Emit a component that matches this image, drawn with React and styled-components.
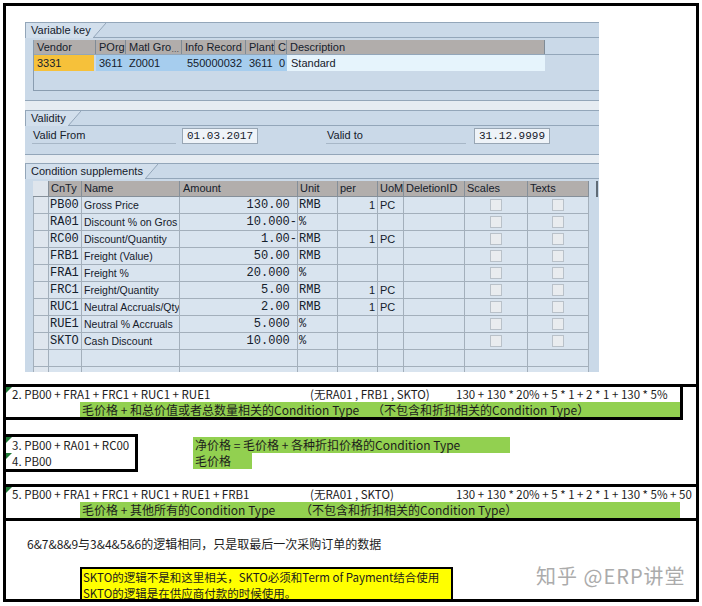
import styled, { createGlobalStyle } from "styled-components";

const GlobalStyle = createGlobalStyle`
  html, body {
    margin: 0;
    padding: 0;
    background: #fff;
  }
  body {
    font-family: "Liberation Sans", Arial, sans-serif;
  }
`;

const sapLine = "#93a6b9";
const gridLine = "#a3afbb";

const Page = styled.div`
  padding: 3px 0 0 3px;
`;

const Frame = styled.div`
  position: relative;
  width: 690px;
  border: 3px solid #000;
`;

/* ---------- SAP screen ---------- */

const SapArea = styled.div`
  height: 381px;
  box-sizing: border-box;
  padding: 16px 0 0 19px;
  border-bottom: 3px solid #000;
`;

const SapScreen = styled.div`
  width: 574px;
  height: 350px;
  background: #e6ecf2;
  display: flex;
  flex-direction: column;
  overflow: hidden;
  color: #15202b;
  font-size: 11px;
`;

const Panel = styled.section`
  flex: none;
  box-sizing: border-box;
  height: ${(p) => p.$h}px;
  margin-top: ${(p) => p.$gap || 0}px;
  background: #cad9e8;
  border-top: 1px solid ${sapLine};
  border-bottom: ${(p) => (p.$open ? "none" : `1px solid ${sapLine}`)};
`;

const PanelHead = styled.div`
  display: flex;
  height: 15px;
`;

const Tab = styled.div`
  padding: 0 2px 0 5px;
  border-left: 1px solid ${sapLine};
  background: #d2dfec;
  line-height: 14px;
  white-space: nowrap;
`;

const TabEdge = styled.svg`
  display: block;
  flex: none;
  width: 13px;
  height: 15px;
`;

const HeadRule = styled.div`
  flex: 1;
  border-bottom: 1px solid ${sapLine};
`;

const PanelTitle = ({ children }) => (
  <PanelHead>
    <Tab>{children}</Tab>
    <TabEdge viewBox="0 0 13 15">
      <polygon points="0,0 13,0 0,15" fill="#d2dfec" />
      <line x1="0" y1="15" x2="13" y2="0" stroke={sapLine} strokeWidth="1" />
      <line x1="0" y1="14.5" x2="13" y2="14.5" stroke={sapLine} strokeWidth="1" />
    </TabEdge>
    <HeadRule />
  </PanelHead>
);

/* variable key table */

const KeyFrame = styled.div`
  margin: 2px 0 0 8px;
  height: 50px;
  border-left: 1px solid #8a9db0;
  border-bottom: 1px solid #8a9db0;
`;

const KeyRow = styled.div`
  display: grid;
  grid-template-columns: 62px 30px 56px 64px 29px 12px 258px 1fr;
  height: ${(p) => p.$h}px;
  border-bottom: ${(p) => (p.$head ? `1px solid ${sapLine}` : "none")};
  box-sizing: border-box;
`;

const KeyHead = styled.div`
  background: #b1adab;
  border-right: 1px solid #7f8b96;
  padding-left: 3px;
  line-height: 14px;
  white-space: nowrap;
  overflow: hidden;
`;

const Ellipsis = styled.span`
  font-size: 8px;
  vertical-align: -1px;
`;

const KeyCell = styled.div`
  background: ${(p) => p.$bg};
  margin-right: ${(p) => p.$gap || 0}px;
  padding-left: ${(p) => (p.$pad ?? 3)}px;
  line-height: 16px;
  white-space: nowrap;
`;

/* validity */

const ValidRow = styled.div`
  display: flex;
  align-items: center;
  height: 17px;
  margin: 1px 0 0 7px;
`;

const FieldLabel = styled.div`
  width: ${(p) => p.$w}px;
  height: 16px;
  box-sizing: border-box;
  padding-left: 1px;
  line-height: 15px;
  border-bottom: 1px solid #a7b7c7;
  margin-right: ${(p) => p.$after}px;
`;

const DateInput = styled.div`
  width: 76px;
  height: 16px;
  box-sizing: border-box;
  border: 1px solid #98a6b4;
  background: #eef3f8;
  font-family: "Liberation Mono", monospace;
  font-size: 11px;
  line-height: 14px;
  padding-left: 4px;
  margin-right: ${(p) => p.$after || 0}px;
`;

/* condition table */

const COLS = "16px 33px 98px 118px 40px 40px 26px 61px 63px 61px 1fr";

const CondTable = styled.div`
  margin: 2px 0 0 8px;
`;

const CondRow = styled.div`
  display: grid;
  grid-template-columns: ${COLS};
  height: ${(p) => p.$h}px;
`;

const HeadCell = styled.div`
  background: ${(p) => (p.$light ? "#dfe5ec" : "#b2aeac")};
  border-right: 1px solid #858f99;
  border-bottom: 1px solid #858f99;
  padding-left: ${(p) => p.$pad ?? 2}px;
  line-height: 15px;
  white-space: nowrap;
  overflow: hidden;
`;

const ScrollEdge = styled.div`
  border-right: 2px solid #5f6b76;
  margin-right: 1px;
`;

const Cell = styled.div`
  background: ${(p) => (p.$light ? "#dfe6ee" : "#d9e4ef")};
  border-right: 1px solid ${gridLine};
  border-bottom: 1px solid ${gridLine};
  border-left: ${(p) => (p.$first ? `1px solid ${gridLine}` : "none")};
  display: flex;
  align-items: center;
  justify-content: ${(p) => (p.$align === "right" ? "flex-end" : p.$align === "center" ? "center" : "flex-start")};
  padding: 0 ${(p) => p.$pr || 0}px 0 ${(p) => p.$pl || 0}px;
  font-family: ${(p) => (p.$mono ? '"Liberation Mono", monospace' : "inherit")};
  font-size: ${(p) => (p.$mono ? "12px" : p.$small ? "10.5px" : "11px")};
  white-space: pre;
  overflow: hidden;
`;

const Check = styled.span`
  width: 10px;
  height: 10px;
  border: 1px solid #b9c1c9;
  background: #e9ecef;
`;

const keyHeads = ["Vendor", "POrg", "Matl Gro", "Info Record", "Plant", "C", "Description"];

const conditions = [
  { type: "PB00", name: "Gross Price", amount: "130.00", unit: "RMB", per: "1", uom: "PC" },
  { type: "RA01", name: "Discount % on Gros", amount: "10.000", neg: true, unit: "%" },
  { type: "RC00", name: "Discount/Quantity", amount: "1.00", neg: true, unit: "RMB", per: "1", uom: "PC" },
  { type: "FRB1", name: "Freight (Value)", amount: "50.00", unit: "RMB" },
  { type: "FRA1", name: "Freight %", amount: "20.000", unit: "%" },
  { type: "FRC1", name: "Freight/Quantity", amount: "5.00", unit: "RMB", per: "1", uom: "PC" },
  { type: "RUC1", name: "Neutral Accruals/Qty", amount: "2.00", unit: "RMB", per: "1", uom: "PC" },
  { type: "RUE1", name: "Neutral % Accruals", amount: "5.000", unit: "%" },
  { type: "SKTO", name: "Cash Discount", amount: "10.000", unit: "%" },
  null,
  null,
];

const condHeads = ["CnTy", "Name", "Amount", "Unit", "per", "UoM", "DeletionID", "Scales", "Texts"];

const ConditionRow = ({ c }) => (
  <CondRow $h={17}>
    <Cell $light $first />
    <Cell $mono $pl={1}>{c ? c.type : ""}</Cell>
    <Cell $small $pl={2}>{c ? c.name : ""}</Cell>
    <Cell $mono $align="right">{c ? `${c.amount}${c.neg ? "-" : " "}` : ""}</Cell>
    <Cell $mono $pl={1}>{c ? c.unit : ""}</Cell>
    <Cell $align="right" $pr={2}>{c && c.per}</Cell>
    <Cell $pl={2}>{c && c.uom}</Cell>
    <Cell />
    <Cell $align="center">{c && <Check />}</Cell>
    <Cell $align="center">{c && <Check />}</Cell>
  </CondRow>
);

/* ---------- spreadsheet notes ---------- */

const Sheet = styled.div`
  font-family: "Noto Sans CJK SC", "Liberation Sans", sans-serif;
  color: #1c1c1c;
`;

const FormulaBox = styled.div`
  width: ${(p) => p.$w}px;
  border-right: ${(p) => (p.$full ? "none" : "3px solid #000")};
  border-top: ${(p) => (p.$top ? "3px solid #000" : "none")};
  border-bottom: 3px solid #000;
  margin-top: ${(p) => p.$gap || 0}px;
`;

const Line = styled.div`
  position: relative;
  display: grid;
  grid-template-columns: 298px 146px 1fr;
  height: ${(p) => p.$h || 15}px;
  padding-left: 6px;
  font-size: 11.5px;
  line-height: ${(p) => p.$h || 15}px;
  white-space: nowrap;
`;

const Marker = styled.span`
  position: absolute;
  left: 0;
  top: 0;
  width: 0;
  height: 0;
  border-top: 6px solid #1f7a36;
  border-right: 6px solid transparent;
`;

const GreenBar = styled.div`
  display: flex;
  width: ${(p) => p.$w}px;
  height: ${(p) => p.$h || 15}px;
  margin-left: ${(p) => p.$left ?? 74}px;
  padding-left: 2px;
  box-sizing: border-box;
  background: #92d050;
  font-size: 12px;
  line-height: ${(p) => p.$h || 15}px;
  white-space: nowrap;
`;

const Lead = styled.span`
  width: ${(p) => p.$w}px;
  flex: none;
`;

const SplitRow = styled.div`
  display: flex;
  align-items: flex-start;
  margin-top: 14px;
`;

const SmallBox = styled.div`
  width: 129px;
  border: 3px solid #000;
  border-left: none;
`;

const NoteStack = styled.div`
  margin: 3px 0 0 55px;
`;

const Closing = styled.div`
  position: relative;
  height: 78px;
  overflow: hidden;
`;

const Remark = styled.div`
  margin: 15px 0 0 21px;
  height: 16px;
  font-size: 12px;
  line-height: 16px;
`;

const Callout = styled.div`
  width: 373px;
  height: 34px;
  margin: 15px 0 0 74px;
  box-sizing: border-box;
  border: 2px solid #000;
  background: #ffff00;
  padding: 1px 0 0 1px;
  font-size: 11.5px;
  line-height: 15.5px;
  white-space: nowrap;
`;

const Watermark = styled.div`
  position: absolute;
  left: 530px;
  top: 43px;
  font-size: 20px;
  line-height: 24px;
  letter-spacing: 1px;
  color: #ababab;
`;

export default function App() {
  return (
    <Page>
      <GlobalStyle />
      <Frame>
        <SapArea>
          <SapScreen>
            <Panel $h={79}>
              <PanelTitle>Variable key</PanelTitle>
              <KeyFrame>
                <KeyRow $h={15} $head>
                  {keyHeads.map((h) => (
                    <KeyHead key={h}>
                      {h === "Matl Gro" ? (
                        <>
                          {h}
                          <Ellipsis>…</Ellipsis>
                        </>
                      ) : (
                        h
                      )}
                    </KeyHead>
                  ))}
                </KeyRow>
                <KeyRow $h={16}>
                  <KeyCell $bg="#f6c13a" $gap={2}>3331</KeyCell>
                  <KeyCell $bg="#a6cdee">3611</KeyCell>
                  <KeyCell $bg="#a6cdee">Z0001</KeyCell>
                  <KeyCell $bg="#a6cdee" $pad={5}>550000032</KeyCell>
                  <KeyCell $bg="#a6cdee">3611</KeyCell>
                  <KeyCell $bg="#a6cdee" $pad={4}>0</KeyCell>
                  <KeyCell $bg="#e6f4fc" $pad={4}>Standard</KeyCell>
                </KeyRow>
              </KeyFrame>
            </Panel>
            <Panel $h={45} $gap={9}>
              <PanelTitle>Validity</PanelTitle>
              <ValidRow>
                <FieldLabel $w={144} $after={6}>Valid From</FieldLabel>
                <DateInput $after={68}>01.03.2017</DateInput>
                <FieldLabel $w={140} $after={8}>Valid to</FieldLabel>
                <DateInput>31.12.9999</DateInput>
              </ValidRow>
            </Panel>
            <Panel $h={220} $gap={8} $open>
              <PanelTitle>Condition supplements</PanelTitle>
              <CondTable>
                <CondRow $h={16}>
                  <HeadCell $light />
                  {condHeads.map((h) => (
                    <HeadCell key={h} $pad={h === "Amount" ? 3 : 2}>
                      {h}
                    </HeadCell>
                  ))}
                  <ScrollEdge />
                </CondRow>
                {conditions.map((c, i) => (
                  <ConditionRow key={i} c={c} />
                ))}
              </CondTable>
            </Panel>
          </SapScreen>
        </SapArea>

        <Sheet>
          <FormulaBox $w={674}>
            <Line>
              <Marker />
              <span>2. PB00 + FRA1 + FRC1 + RUC1 + RUE1</span>
              <span>(无RA01 , FRB1 , SKTO)</span>
              <span>130 + 130 * 20% + 5 * 1 + 2 * 1 + 130 * 5%</span>
            </Line>
            <GreenBar $w={600}>
              <Lead $w={290}>毛价格 + 和总价值或者总数量相关的Condition Type</Lead>
              <span>（不包含和折扣相关的Condition Type）</span>
            </GreenBar>
          </FormulaBox>

          <SplitRow>
            <SmallBox>
              <Line $h={16}>
                <Marker />
                <span>3. PB00 + RA01 + RC00</span>
              </Line>
              <Line $h={16}>
                <Marker />
                <span>4. PB00</span>
              </Line>
            </SmallBox>
            <NoteStack>
              <GreenBar $w={317} $h={16} $left={0}>
                净价格 = 毛价格 + 各种折扣价格的Condition Type
              </GreenBar>
              <GreenBar $w={59} $h={16} $left={0}>
                毛价格
              </GreenBar>
            </NoteStack>
          </SplitRow>

          <FormulaBox $w={690} $full $top $gap={12}>
            <Line>
              <Marker />
              <span>5. PB00 + FRA1 + FRC1 + RUC1 + RUE1 + FRB1</span>
              <span>(无RA01 , SKTO)</span>
              <span>130 + 130 * 20% + 5 * 1 + 2 * 1 + 130 * 5% + 50</span>
            </Line>
            <GreenBar $w={600} $h={16}>
              <Lead $w={218}>毛价格 + 其他所有的Condition Type</Lead>
              <span>（不包含和折扣相关的Condition Type）</span>
            </GreenBar>
          </FormulaBox>

          <Closing>
            <Remark>6&amp;7&amp;8&amp;9与3&amp;4&amp;5&amp;6的逻辑相同，只是取最后一次采购订单的数据</Remark>
            <Callout>
              <div>SKTO的逻辑不是和这里相关，SKTO必须和Term of Payment结合使用</div>
              <div>SKTO的逻辑是在供应商付款的时候使用。</div>
            </Callout>
            <Watermark>知乎 @ERP讲堂</Watermark>
          </Closing>
        </Sheet>
      </Frame>
    </Page>
  );
}
